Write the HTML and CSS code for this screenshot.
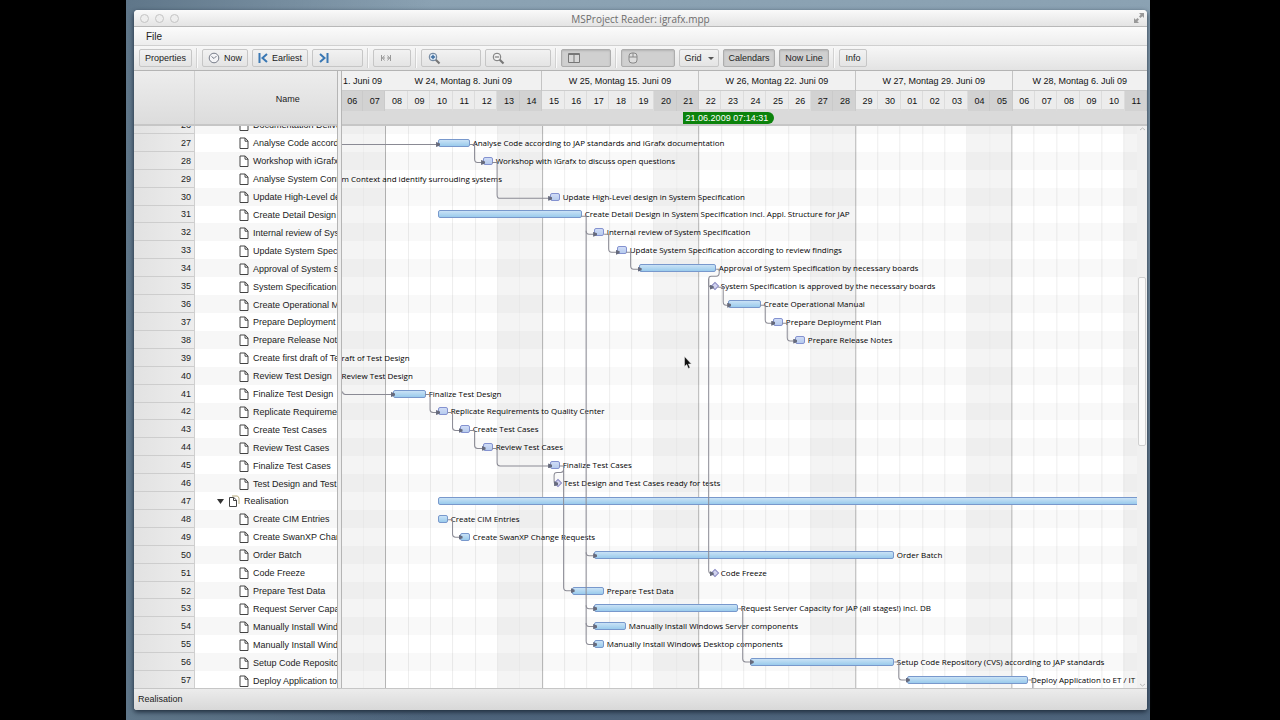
FILE: index.html
```html
<!DOCTYPE html>
<html lang="en">
<head>
<meta charset="utf-8">
<title>MSProject Reader: igrafx.mpp</title>
<link rel="stylesheet" href="styles.css">
</head>
<body>
<svg class="defs" aria-hidden="true">
  <symbol id="doc" viewBox="0 0 10 12"><path d="M1 1h5.200L9 4v7.500H1z" fill="#fff" stroke="#444"/><path d="M6 1v3.200h3" fill="none" stroke="#444"/></symbol>
</svg>
<div class="desktop">
<main class="window">
  <header class="titlebar">
    <div class="lights"><button aria-label="Close"></button><button aria-label="Minimize"></button><button aria-label="Zoom"></button></div>
    <h1>MSProject Reader: igrafx.mpp</h1>
    <button class="full" aria-label="Full screen"><svg width="12" height="12" viewBox="0 0 12 12"><path d="M6 1h5v5L9.300 4.300 7.500 6 6 4.500 7.700 2.700zM6 11H1V6l1.700 1.700L4.500 6 6 7.500 4.300 9.300z" fill="#999"/></svg></button>
  </header>
  <nav class="menubar"><button>File</button></nav>
  <div class="toolbar">
    <button class="btn w-prop">Properties</button><i class="sep"></i>
    <button class="btn w-now"><svg width="12" height="12" viewBox="0 0 12 12"><circle cx="6" cy="6" r="4.800" fill="#f4f4f6" stroke="#777c88"/><path d="M3.500 4.500 6 6.500 8.500 4" fill="none" stroke="#777c88"/></svg>Now</button>
    <button class="btn w-early"><svg width="10" height="10" viewBox="0 0 10 10"><path d="M1.500 0v10M9 1 4.500 5 9 9" fill="none" stroke="#3a78b4" stroke-width="2"/></svg>Earliest</button>
    <button class="btn left w-late" aria-label="Latest"><svg width="10" height="10" viewBox="0 0 10 10"><path d="M8.500 0v10M1 1 5.500 5 1 9" fill="none" stroke="#3a78b4" stroke-width="2"/></svg></button><i class="sep"></i>
    <button class="btn left w-fit" aria-label="Fit"><svg width="12" height="8" viewBox="0 0 12 8"><path d="M1.500 1v6M4.500 1.500 2.500 4l2 2.500M2 4h3M10.500 1v6M7.500 1.500 9.500 4l-2 2.500M7 4h3" fill="none" stroke="#999"/></svg></button><i class="sep"></i>
    <button class="btn left w-zin" aria-label="Zoom in"><svg width="13" height="13" viewBox="0 0 13 13"><path d="m7.500 7.500 4 4" stroke="#777" stroke-width="2.200"/><circle cx="5" cy="5" r="3.800" fill="#e4edf6" stroke="#667c96"/><path d="M2.800 5h4.400M5 2.800v4.400" stroke="#3b6ca0" stroke-width="1.400"/></svg></button>
    <button class="btn left w-zout" aria-label="Zoom out"><svg width="13" height="13" viewBox="0 0 13 13"><path d="m7.500 7.500 4 4" stroke="#777" stroke-width="2.200"/><circle cx="5" cy="5" r="3.800" fill="#f2f2f2" stroke="#777"/><path d="M2.800 5h4.400" stroke="#666"/></svg></button><i class="sep"></i>
    <button class="btn left on w-tab" aria-label="Table" aria-pressed="true"><svg width="12" height="10" viewBox="0 0 12 10"><path d="M.5.5h11v9H.5zM6 1v8" fill="#d8d8d8" stroke="#777"/><path d="M0 1.500h12" stroke="#777"/></svg></button><i class="sep"></i>
    <button class="btn left on w-mouse" aria-label="Mouse" aria-pressed="true"><svg width="10" height="12" viewBox="0 0 10 12"><rect x="1" y="1" width="8" height="10" rx="3" fill="#ddd" stroke="#888"/><path d="M1 5h8M5 1v4" stroke="#888"/></svg></button>
    <button class="btn w-grid">Grid<svg width="6" height="3" viewBox="0 0 6 3"><path d="M0 0h6L3 3z" fill="#555"/></svg></button>
    <button class="btn on w-cal" aria-pressed="true">Calendars</button>
    <button class="btn on w-line" aria-pressed="true">Now Line</button><i class="sep"></i>
    <button class="btn w-info">Info</button>
  </div>
  <div class="split">
    <section class="tree">
      <div class="treehead"><span></span><span>Name</span></div>
      <div class="clip">
      <table><tbody>
        <tr><th>26</th><td><svg><use href="#doc"/></svg>Documentation Delivery</td></tr>
        <tr><th>27</th><td><svg><use href="#doc"/></svg>Analyse Code according</td></tr>
        <tr><th>28</th><td><svg><use href="#doc"/></svg>Workshop with iGrafx</td></tr>
        <tr><th>29</th><td><svg><use href="#doc"/></svg>Analyse System Context</td></tr>
        <tr><th>30</th><td><svg><use href="#doc"/></svg>Update High-Level design</td></tr>
        <tr><th>31</th><td><svg><use href="#doc"/></svg>Create Detail Design</td></tr>
        <tr><th>32</th><td><svg><use href="#doc"/></svg>Internal review of System</td></tr>
        <tr><th>33</th><td><svg><use href="#doc"/></svg>Update System Specification</td></tr>
        <tr><th>34</th><td><svg><use href="#doc"/></svg>Approval of System Specification</td></tr>
        <tr><th>35</th><td><svg><use href="#doc"/></svg>System Specification</td></tr>
        <tr><th>36</th><td><svg><use href="#doc"/></svg>Create Operational Manual</td></tr>
        <tr><th>37</th><td><svg><use href="#doc"/></svg>Prepare Deployment</td></tr>
        <tr><th>38</th><td><svg><use href="#doc"/></svg>Prepare Release Notes</td></tr>
        <tr><th>39</th><td><svg><use href="#doc"/></svg>Create first draft of Test</td></tr>
        <tr><th>40</th><td><svg><use href="#doc"/></svg>Review Test Design</td></tr>
        <tr><th>41</th><td><svg><use href="#doc"/></svg>Finalize Test Design</td></tr>
        <tr><th>42</th><td><svg><use href="#doc"/></svg>Replicate Requirements</td></tr>
        <tr><th>43</th><td><svg><use href="#doc"/></svg>Create Test Cases</td></tr>
        <tr><th>44</th><td><svg><use href="#doc"/></svg>Review Test Cases</td></tr>
        <tr><th>45</th><td><svg><use href="#doc"/></svg>Finalize Test Cases</td></tr>
        <tr><th>46</th><td><svg><use href="#doc"/></svg>Test Design and Test</td></tr>
        <tr class="group"><th>47</th><td><button aria-label="Collapse"></button><svg viewBox="0 0 11 12"><path d="M3.500 1H9l1.500 2v6" fill="none" stroke="#b5a878"/><path d="M1 2.500h4.200L8 5v6.500H1z" fill="#fff" stroke="#444"/><path d="M5 2.500v3h3" fill="none" stroke="#444"/></svg>Realisation</td></tr>
        <tr><th>48</th><td><svg><use href="#doc"/></svg>Create CIM Entries</td></tr>
        <tr><th>49</th><td><svg><use href="#doc"/></svg>Create SwanXP Change</td></tr>
        <tr><th>50</th><td><svg><use href="#doc"/></svg>Order Batch</td></tr>
        <tr><th>51</th><td><svg><use href="#doc"/></svg>Code Freeze</td></tr>
        <tr><th>52</th><td><svg><use href="#doc"/></svg>Prepare Test Data</td></tr>
        <tr><th>53</th><td><svg><use href="#doc"/></svg>Request Server Capacity</td></tr>
        <tr><th>54</th><td><svg><use href="#doc"/></svg>Manually Install Windows</td></tr>
        <tr><th>55</th><td><svg><use href="#doc"/></svg>Manually Install Windows</td></tr>
        <tr><th>56</th><td><svg><use href="#doc"/></svg>Setup Code Repository</td></tr>
        <tr><th>57</th><td><svg><use href="#doc"/></svg>Deploy Application to</td></tr>
      </tbody></table>
      </div>
    </section>
    <div class="divider"></div>
    <section class="gantt">
      <div class="scale">
        <div class="weeks"><span>1. Juni 09</span><span>W 24, Montag 8. Juni 09</span><span>W 25, Montag 15. Juni 09</span><span>W 26, Montag 22. Juni 09</span><span>W 27, Montag 29. Juni 09</span><span>W 28, Montag 6. Juli 09</span></div>
        <div class="days"><b>06</b><b>07</b><span>08</span><span>09</span><span>10</span><span>11</span><span>12</span><b>13</b><b>14</b><span>15</span><span>16</span><span>17</span><span>18</span><span>19</span><b>20</b><b>21</b><span>22</span><span>23</span><span>24</span><span>25</span><span>26</span><b>27</b><b>28</b><span>29</span><span>30</span><span>01</span><span>02</span><span>03</span><b>04</b><b>05</b><span>06</span><span>07</span><span>08</span><span>09</span><span>10</span><b>11</b></div>
        <div class="now"><time datetime="2009-06-21T07:14:31">21.06.2009 07:14:31</time></div>
      </div>
      <div class="body">
      <div class="chart">
        <svg class="layer" viewBox="342 125 795 563" preserveAspectRatio="none" aria-hidden="true">
          <path d="M342 125h43v563h-43zM497 125h45v563h-45zM654 125h44v563h-44zM810 125h45v563h-45zM967 125h44v563h-44zM1123 125h14v563h-14z" fill="#f4f4f4"/>
          <path d="M363.500 125v563M408.500 125v563M430.500 125v563M452.500 125v563M475.500 125v563M497.500 125v563M519.500 125v563M564.500 125v563M586.500 125v563M609.500 125v563M631.500 125v563M653.500 125v563M676.500 125v563M721.500 125v563M743.500 125v563M765.500 125v563M788.500 125v563M810.500 125v563M832.500 125v563M877.500 125v563M899.500 125v563M922.500 125v563M944.500 125v563M966.500 125v563M989.500 125v563M1033.500 125v563M1056.500 125v563M1078.500 125v563M1101.500 125v563M1123.500 125v563" stroke="#eee"/>
          <path d="M385.500 125v563M542.500 125v563M698.500 125v563M855.500 125v563M1011.500 125v563" stroke="#b4b4b4"/>
        </svg>
        <div class="rows">
          <div></div>
          <div><i style="--x:96;--w:32"></i>Analyse Code according to JAP standards and iGrafx documentation</div>
          <div><i class="s" style="--x:141;--w:10"></i>Workshop with iGrafx to discuss open questions</div>
          <div>m Context and identify surrouding systems</div>
          <div><i class="s" style="--x:208;--w:10"></i>Update High-Level design in System Specification</div>
          <div><i style="--x:96;--w:144"></i>Create Detail Design in System Specification incl. Appl. Structure for JAP</div>
          <div><i class="s" style="--x:252;--w:10"></i>Internal review of System Specification</div>
          <div><i class="s" style="--x:275;--w:10"></i>Update System Specification according to review findings</div>
          <div><i style="--x:297;--w:77"></i>Approval of System Specification by necessary boards</div>
          <div><i class="m" style="--x:370;--w:6"></i>System Specification is approved by the necessary boards</div>
          <div><i style="--x:386;--w:33"></i>Create Operational Manual</div>
          <div><i class="s" style="--x:431;--w:10"></i>Prepare Deployment Plan</div>
          <div><i class="s" style="--x:453;--w:10"></i>Prepare Release Notes</div>
          <div>raft of Test Design</div>
          <div>Review Test Design</div>
          <div><i style="--x:51;--w:33"></i>Finalize Test Design</div>
          <div><i class="s" style="--x:96;--w:10"></i>Replicate Requirements to Quality Center</div>
          <div><i class="s" style="--x:118;--w:10"></i>Create Test Cases</div>
          <div><i class="s" style="--x:141;--w:10"></i>Review Test Cases</div>
          <div><i class="s" style="--x:208;--w:10"></i>Finalize Test Cases</div>
          <div><i class="m" style="--x:213;--w:6"></i>Test Design and Test Cases ready for tests</div>
          <div><i style="--x:96;--w:710"></i></div>
          <div><i style="--x:96;--w:10"></i>Create CIM Entries</div>
          <div><i style="--x:118;--w:10"></i>Create SwanXP Change Requests</div>
          <div><i style="--x:252;--w:300"></i>Order Batch</div>
          <div><i class="m" style="--x:370;--w:6"></i>Code Freeze</div>
          <div><i style="--x:230;--w:32"></i>Prepare Test Data</div>
          <div><i style="--x:252;--w:144"></i>Request Server Capacity for JAP (all stages!) incl. DB</div>
          <div><i style="--x:252;--w:32"></i>Manually Install Windows Server components</div>
          <div><i style="--x:252;--w:10"></i>Manually Install Windows Desktop components</div>
          <div><i style="--x:408;--w:144"></i>Setup Code Repository (CVS) according to JAP standards</div>
          <div><i style="--x:565;--w:121"></i>Deploy Application to ET / IT</div>
        </div>
        <svg class="layer" viewBox="342 125 795 563" preserveAspectRatio="none" aria-hidden="true">
          <marker id="a" viewBox="0 0 4 5" refX="2" refY="2.500" markerWidth="4" markerHeight="5" markerUnits="userSpaceOnUse" orient="auto"><path d="M0 0 4 1.500v2L0 5z" fill="#666a7c"/></marker>
          <g class="links">
            <path d="M342 143.500H438"/><path d="M470 143.500h4.500V158q0 3.500 3 3.500H483"/><path d="M492 161.500h5V194q0 3.500 3 3.500h50"/>
            <path d="M581 215.500h5V641q0 3.500 3 3.500H595"/><path d="M586 230q0 3.500 3 3.500h6"/><path d="M586 552q0 3.500 3 3.500h6"/><path d="M586 605q0 3.500 3 3.500h6"/><path d="M586 623q0 3.500 3 3.500h6"/>
            <path d="M604 233.500h4.500V248q0 3.500 3 3.500h6"/><path d="M626 251.500h4.500V265q0 3.500 3 3.500h6"/>
            <path d="M716 268.500h3V272q0 3.500-3 3.500H711q-2.500 0-2.500 3V284q0 2.500 3 2.500"/><path d="M708.500 278V570q0 3.500 3 3.500"/>
            <path d="M718 286.500h5V301q0 3.500 3 3.500h3"/><path d="M760 304.500h5V319q0 3.500 3 3.500h5"/><path d="M782 322.500h5V337q0 3.500 3 3.500h5"/>
            <path d="M342.500 391q0 3 3 3H393"/><path d="M425 394h5V409q0 3 3 3h5"/><path d="M448 412h4.500V427q0 3 3 3h5"/><path d="M470 430h4.500V445q0 3 3 3h6"/><path d="M492 448h5V462.500q0 3 3 3h50"/>
            <path d="M559 465.500h4.500V469q0 3-3 3H557q-3 0-3 3v6q0 2.500 2 2.500"/><path d="M563.500 470V587q0 3.500 3 3.500h6"/>
            <path d="M448 519.500h4.500V534q0 3 3 3h5"/><path d="M738 608.500h4.500V659q0 3 3 3h6"/><path d="M894 662h4.500V677q0 3 3 3h6"/><path class="end" d="M1028 680h4.500v8"/>
          </g>
        </svg>
        <svg class="cursor" width="8" height="14" viewBox="0 0 8 14" aria-hidden="true"><path d="M.5.500v10l2.200-2 1.700 4 1.600-.700-1.600-3.800h3z" fill="#111" stroke="#eee" stroke-width=".5"/></svg>
      </div>
      <div class="scroll"><svg width="7" height="5" viewBox="0 0 7 5"><path d="M1 4l2.500-2L6 4" fill="none" stroke="#bbb"/></svg><span></span><svg width="7" height="5" viewBox="0 0 7 5"><path d="M1 1l2.500 2L6 1" fill="none" stroke="#bbb"/></svg></div>
      </div>
    </section>
  </div>
  <footer class="status">Realisation</footer>
</main>
</div>
</body>
</html>
```
FILE: styles.css
```css
* { box-sizing: border-box; }
body {
  margin: 0;
  padding: 0 130px 0 126px;
  height: 100vh;
  overflow: hidden;
  background: #000;
  color: #222;
  font: 9px/12px "Liberation Sans", Arial, sans-serif;
}
button { font: inherit; color: inherit; border: 0; padding: 0; background: none; }
.defs { position: absolute; width: 0; height: 0; }
.desktop {
  height: 100%;
  padding: 10px 3px 10px 8px;
  background: linear-gradient(90deg, #5f7689, transparent 30%), linear-gradient(#8ba2b3 0, #7890a3 40%, #4d637a 100%);
}
.window {
  height: 100%;
  display: flex;
  flex-direction: column;
  overflow: hidden;
  border-radius: 4px 4px 3px 3px;
  background: #ececec;
  box-shadow: 0 2px 5px #1c2a3a;
}

/* title and menu */
.titlebar {
  height: 17px;
  display: grid;
  grid-template-columns: 1fr auto 1fr;
  align-items: center;
  border-bottom: 1px solid #b8b8b8;
  background: linear-gradient(#fafafa, #e4e4e4);
}
.titlebar h1 { margin: 0; padding-top: 1px; font: 10px/14px "Open Sans", sans-serif; color: #6c6c6c; }
.lights { display: flex; gap: 6px; padding-left: 6px; }
.lights button { width: 9px; height: 9px; border: 1px solid #c4c4c4; border-radius: 50%; background: #eee; }
.full { justify-self: end; width: 12px; height: 12px; margin-right: 2px; }
.full svg { display: block; }
.menubar { height: 19px; padding: 2px 0 0 12px; display: flex; align-items: center; border-bottom: 1px solid #d0d0d0; background: linear-gradient(#fbfbfb, #ededed); font-size: 10px; }

/* toolbar */
.toolbar { height: 25px; padding-left: 5px; display: flex; align-items: center; gap: 4px; border-bottom: 1px solid #b4b4b4; background: linear-gradient(#f7f7f7, #e3e3e3); }
.btn { height: 18px; display: flex; align-items: center; justify-content: center; gap: 4px; border: 1px solid #c6c6c6; border-radius: 2px; background: linear-gradient(#f2f2f2, #e4e4e4); white-space: nowrap; }
.btn.left { justify-content: flex-start; padding-left: 6px; }
.btn.on { border-color: #adadad; background: #d0d0d0; box-shadow: inset 0 1px 2px #b4b4b4; }
.sep { width: 2px; height: 20px; border-left: 1px solid #d2d2d2; border-right: 1px solid #fafafa; }
.w-prop { width: 53px; }
.w-now { width: 46px; }
.w-early { width: 56px; }
.w-late { width: 51px; }
.w-fit { width: 38px; }
.w-zin { width: 60px; }
.w-zout { width: 66px; }
.w-tab { width: 50px; }
.w-mouse { width: 54px; }
.w-grid { width: 40px; }
.btn.w-grid { gap: 6px; }
.w-cal { width: 52px; }
.w-line { width: 50px; }
.w-info { width: 28px; }

/* panes */
.split { flex: 1; min-height: 0; display: flex; }
.tree { width: 20%; display: flex; flex-direction: column; }
.treehead { height: 55px; display: grid; grid-template-columns: 61px 1fr; background: linear-gradient(#ededed, #dcdcdc); border-bottom: 2px solid #c6c6c6; }
.treehead span { display: flex; align-items: center; justify-content: center; padding: 2px 0 0 44px; }
.treehead span:first-child { border-right: 1px solid #d0d0d0; }
.clip { flex: 1; min-height: 0; overflow: hidden; background: #fff; }
table { display: block; height: calc(100% + 11px); margin-top: -10px; }
tbody { height: 100%; display: grid; grid-auto-rows: 1fr; }
tr { display: grid; grid-template-columns: 61px 1fr; min-height: 0; }
tr:nth-child(odd) td { background: #f7f7f7; }
th { display: flex; align-items: center; justify-content: flex-end; padding: 1px 3px 0 0; font-weight: normal; background: linear-gradient(90deg, #e2e2e2, #ededed); border-right: 1px solid #cfcfcf; border-bottom: 1px solid #cdcdcd; }
td { display: flex; align-items: center; gap: 4px; padding: 1px 0 0 44px; white-space: nowrap; overflow: hidden; }
td svg { flex: none; width: 10px; height: 12px; }
.group td { padding-left: 22px; }
.group td svg { width: 12px; }
.group button { width: 7px; height: 5px; background: #333; clip-path: polygon(0 0, 100% 0, 50% 100%); }
.divider { width: 5px; border: 1px solid #b5b5b5; border-width: 0 1px; background: #eee; }

/* time scale */
.gantt { flex: 1; min-width: 0; display: flex; flex-direction: column; overflow: hidden; }
.scale { height: 55px; margin-left: -1px; border-bottom: 2px solid #c6c6c6; background: #dadada; }
.weeks, .days { display: grid; grid-template-columns: repeat(36, 1fr); text-align: center; white-space: nowrap; color: #111; }
.weeks { height: 20px; line-height: 21px; background: #f1f1f1; border-bottom: 1px solid #ccc; }
.weeks span { grid-column: span 7; border-right: 1px solid #c4c4c4; }
.weeks span:first-child { grid-column: span 2; border-color: transparent; }
.weeks span:last-child { grid-column: span 6; border: 0; }
.days { height: 18px; line-height: 20px; background: #ececec; }
.days > * { font-weight: normal; padding-left: 2px; border-right: 1px solid #dcdcdc; }
.days b { background: #d2d2d2; border-color: #cacaca; }
.now { padding: 3px 0 0 342px; line-height: 12px; }
time { display: block; width: 91px; height: 12px; padding-left: 3px; border-radius: 0 6px 6px 0; background: #0c830c; color: #fff; white-space: nowrap; }

/* chart */
.body { flex: 1; min-height: 0; display: flex; }
.chart { position: relative; flex: 1; min-width: 0; overflow: hidden; background: #fff; }
.layer { position: absolute; inset: 0; width: 100%; height: 100%; }
.rows { position: relative; height: calc(100% + 11px); margin-top: -10px; display: grid; grid-template-columns: 100%; grid-auto-rows: 1fr; font: 8px/12px "Open Sans", sans-serif; color: #000; }
.rows div { display: flex; align-items: center; gap: 3px; min-height: 0; white-space: nowrap; }
.rows div:nth-child(odd) { background: rgba(0, 0, 0, .025); }
.rows i { flex: none; height: 8px; width: calc(var(--w) * 100% / 795); margin-left: calc(var(--x) * 100% / 795); border: 1px solid #7898cc; border-radius: 2px; background: linear-gradient(#c9e2f6, #9acbec); }
.rows .s { border-color: #8492d0; background: linear-gradient(#d0dcf6, #b6cbee); }
.rows .m { height: 6px; border-radius: 0; rotate: 45deg; border-color: #9090c4; background: #d2d4f0; }
.links path { fill: none; stroke: #8a8a94; marker-end: url(#a); }
.links .end { marker-end: none; }
.cursor { position: absolute; left: 43%; top: 41%; }
.scroll { width: 10px; display: flex; flex-direction: column; align-items: center; background: #f0f0f0; }
.scroll span { width: 8px; height: 30%; margin: 146px 0 auto; border: 1px solid #d0d0d0; border-radius: 2px; background: #fafafa; }
.status { height: 22px; padding-left: 4px; line-height: 21px; border-top: 1px solid #c6c6c6; background: linear-gradient(#ececec, #d8d8d8); }
```
